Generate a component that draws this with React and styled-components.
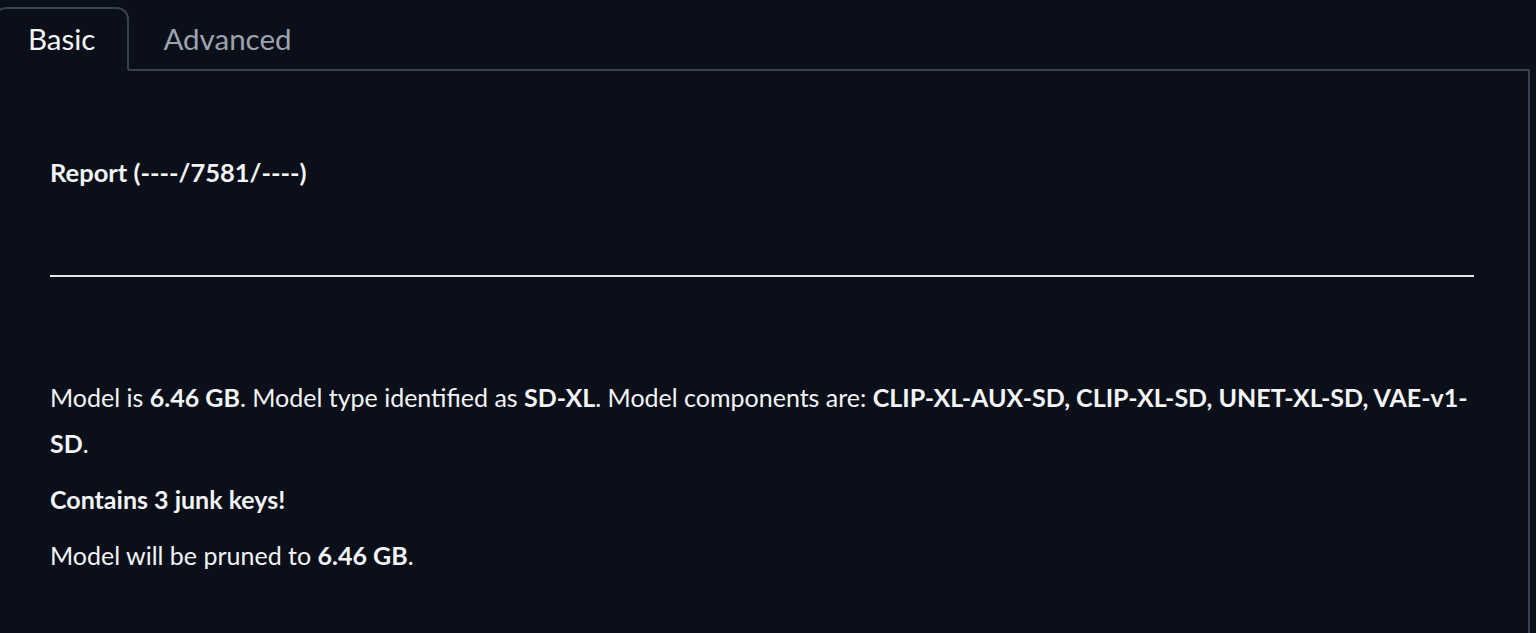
import React from 'react';
import styled, { createGlobalStyle } from 'styled-components';

const GlobalStyle = createGlobalStyle`
  html, body {
    margin: 0;
    padding: 0;
    background: #0b0f19;
  }
  body {
    font-family: Lato, "Liberation Sans", sans-serif;
    color: #f3f4f6;
    overflow: hidden;
  }
`;

const Page = styled.div`
  min-height: 633px;
  padding-top: 7px;
  box-sizing: border-box;
`;

const Tabs = styled.div`
  margin: 0 6px 0 -6px;
`;

const TabNav = styled.div`
  display: flex;
  align-items: flex-start;
`;

const Tab = styled.button`
  font-family: inherit;
  font-size: 29.5px;
  line-height: 60px;
  height: ${p => (p.$active ? '64px' : '62px')};
  padding: 0 32px;
  margin-bottom: ${p => (p.$active ? '-2px' : '0')};
  background: ${p => (p.$active ? '#0b0f19' : 'transparent')};
  color: ${p => (p.$active ? '#f3f4f6' : '#9ca3af')};
  border: 2px solid ${p => (p.$active ? '#374151' : 'transparent')};
  border-bottom: ${p => (p.$active ? '2px solid #0b0f19' : 'none')};
  border-radius: 12px 12px 0 0;
  cursor: pointer;
  position: relative;
  z-index: ${p => (p.$active ? 1 : 0)};
`;

const Panel = styled.div`
  border: 2px solid #374151;
  border-bottom: none;
  padding: 81px 54px 60px;
  min-height: 600px;
`;

const Heading = styled.div`
  font-size: 25.5px;
  line-height: 40px;
  font-weight: 700;
  margin: 0;
`;

const Rule = styled.hr`
  border: none;
  height: 2px;
  background: #e5e7eb;
  margin: 83px 0 97px;
`;

const Para = styled.p`
  font-size: 25px;
  line-height: 46px;
  margin: 0 0 10px;
`;

const Strong = styled.b`
  font-weight: 700;
`;

const Line = styled.span`
  white-space: nowrap;
`;

const App = () => (
  <Page>
    <GlobalStyle />
    <Tabs>
      <TabNav>
        <Tab $active>Basic</Tab>
        <Tab>Advanced</Tab>
      </TabNav>
      <Panel>
        <Heading>Report (----/7581/----)</Heading>
        <Rule />
        <Para>
          <Line>
            Model is <Strong>6.46 GB</Strong>. Model type identified as <Strong>SD-XL</Strong>. Model components are:{' '}
            <Strong>CLIP-XL-AUX-SD, CLIP-XL-SD, UNET-XL-SD, VAE-v1-</Strong>
          </Line>
          <br />
          <Strong>SD</Strong>.
        </Para>
        <Para>
          <Strong>Contains 3 junk keys!</Strong>
        </Para>
        <Para>
          Model will be pruned to <Strong>6.46 GB</Strong>.
        </Para>
      </Panel>
    </Tabs>
  </Page>
);

export default App;
